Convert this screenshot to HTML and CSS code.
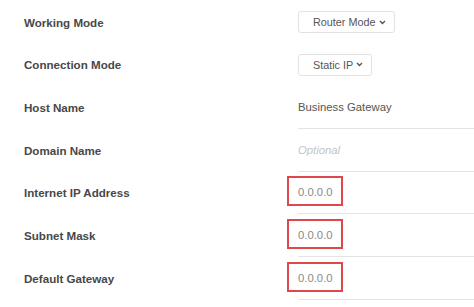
FILE: index.html
```html
<!DOCTYPE html>
<html lang="en">
<head>
  <meta charset="UTF-8">
  <meta name="viewport" content="width=device-width, initial-scale=1.0">
  <title>WAN Settings</title>
  <link rel="stylesheet" href="styles.css">
</head>
<body>

<div class="form">
  <div class="row">
    <div class="label">Working Mode</div>
    <div class="value">
      <div class="select wide"><span>Router Mode</span>
        <svg class="chev" width="7" height="5" viewBox="0 0 7 5"><path d="M1 1l2.5 2.5L6 1" fill="none" stroke="#555" stroke-width="1.4"/></svg>
      </div>
    </div>
  </div>
  <div class="row">
    <div class="label">Connection Mode</div>
    <div class="value">
      <div class="select narrow"><span>Static IP</span>
        <svg class="chev" width="7" height="5" viewBox="0 0 7 5"><path d="M1 1l2.5 2.5L6 1" fill="none" stroke="#555" stroke-width="1.4"/></svg>
      </div>
    </div>
  </div>
  <div class="row">
    <div class="label">Host Name</div>
    <div class="value field">Business Gateway</div>
  </div>
  <div class="row">
    <div class="label">Domain Name</div>
    <div class="value field placeholder">Optional</div>
  </div>
  <div class="row">
    <div class="label">Internet IP Address</div>
    <div class="value field ip">0.0.0.0<span class="mark"></span></div>
  </div>
  <div class="row">
    <div class="label">Subnet Mask</div>
    <div class="value field ip">0.0.0.0<span class="mark"></span></div>
  </div>
  <div class="row">
    <div class="label">Default Gateway</div>
    <div class="value field ip">0.0.0.0<span class="mark"></span></div>
  </div>
</div>

</body>
</html>
```

FILE: styles.css
```css
body {
  margin: 0;
  padding: 0;
  background-color: #fff;
  font-family: "Liberation Sans", Arial, sans-serif;
  font-size: 11.3px;
  overflow: hidden;
}
.form {
  padding-top: 1px;
  padding-left: 24px;
}
.row {
  display: grid;
  grid-template-columns: 274px 1fr;
  height: 42.67px;
  align-items: center;
}
.label {
  font-weight: bold;
  font-size: 11.6px;
  color: #484848;
}
.value {
  color: #555;
}
.field {
  position: relative;
  align-self: stretch;
  display: flex;
  align-items: center;
  border-bottom: 1px solid #e4e4e4;
  box-sizing: border-box;
}
.placeholder {
  color: #c4c4c4;
  font-style: italic;
}
.ip {
  color: #8a8a8a;
}
.mark {
  position: absolute;
  left: -11px;
  top: 50%;
  width: 56px;
  height: 30px;
  margin-top: -16px;
  border: 2px solid #e0474c;
  box-sizing: border-box;
}
.select {
  display: flex;
  align-items: center;
  height: 22px;
  padding-left: 14px;
  border: 1px solid #e2e2e2;
  border-radius: 3px;
  box-sizing: border-box;
  color: #555;
  font-size: 10.8px;
  white-space: nowrap;
}
.select.wide {
  width: 97px;
}
.select.narrow {
  width: 74px;
}
.chev {
  flex-shrink: 0;
  margin-left: auto;
  margin-right: 8px;
}
```
